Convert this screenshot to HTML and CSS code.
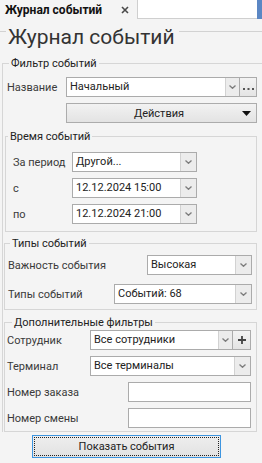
FILE: index.html
```html
<!DOCTYPE html>
<html lang="ru">
<head>
  <meta charset="UTF-8">
  <meta name="viewport" content="width=device-width, initial-scale=1.0">
  <title>Журнал событий</title>
  <link rel="stylesheet" href="styles.css">
</head>
<body>
  <div class="tabbar">
    <div class="tab">
      <span class="tab-title">Журнал событий</span>
      <svg class="tab-close" width="8" height="8" viewBox="0 0 8 8"><path d="M1 1L7 7M7 1L1 7" stroke="#4a4a4a" stroke-width="1.6"/></svg>
    </div>
    <div class="tab-search"></div>
    <div class="tab-edge"></div>
  </div>

  <div class="journal">
    <h1 class="journal-title">Журнал событий</h1>

    <div class="group filter">
      <div class="group-title">Фильтр событий</div>

      <div class="field field-name">
        <span class="field-label">Название</span>
        <div class="combo combo-name">
          <span class="combo-text">Начальный</span>
          <span class="combo-arrow arrow-narrow"><svg width="7" height="4" viewBox="0 0 7 4"><path d="M0.5 0.5L3.5 3.3L6.5 0.5" fill="none" stroke="#7d7d7d" stroke-width="1.3"/></svg></span>
        </div>
        <button class="small-btn btn-more"><svg width="11" height="2" viewBox="0 0 11 2"><rect x="0" y="0" width="2" height="2" fill="#555"/><rect x="4.5" y="0" width="2" height="2" fill="#555"/><rect x="9" y="0" width="2" height="2" fill="#555"/></svg></button>
      </div>

      <div class="field field-actions">
        <button class="actions">
          <span class="actions-text">Действия</span>
          <svg class="actions-caret" width="9" height="5" viewBox="0 0 9 5"><path d="M0 0H9L4.5 5Z" fill="#111"/></svg>
        </button>
      </div>

      <div class="group time">
        <div class="group-title">Время событий</div>
        <div class="rows">
          <div class="field">
            <span class="field-label">За период</span>
            <div class="combo combo-time">
              <span class="combo-text">Другой...</span>
              <span class="combo-arrow"><svg width="7" height="4" viewBox="0 0 7 4"><path d="M0.5 0.5L3.5 3.3L6.5 0.5" fill="none" stroke="#7d7d7d" stroke-width="1.3"/></svg></span>
            </div>
          </div>
          <div class="field">
            <span class="field-label">с</span>
            <div class="combo combo-time">
              <span class="combo-text">12.12.2024 15:00</span>
              <span class="combo-arrow"><svg width="7" height="4" viewBox="0 0 7 4"><path d="M0.5 0.5L3.5 3.3L6.5 0.5" fill="none" stroke="#7d7d7d" stroke-width="1.3"/></svg></span>
            </div>
          </div>
          <div class="field">
            <span class="field-label">по</span>
            <div class="combo combo-time">
              <span class="combo-text">12.12.2024 21:00</span>
              <span class="combo-arrow"><svg width="7" height="4" viewBox="0 0 7 4"><path d="M0.5 0.5L3.5 3.3L6.5 0.5" fill="none" stroke="#7d7d7d" stroke-width="1.3"/></svg></span>
            </div>
          </div>
        </div>
      </div>

      <div class="group types">
        <div class="group-title">Типы событий</div>
        <div class="rows">
          <div class="field">
            <span class="field-label">Важность события</span>
            <div class="combo combo-level">
              <span class="combo-text">Высокая</span>
              <span class="combo-arrow"><svg width="7" height="4" viewBox="0 0 7 4"><path d="M0.5 0.5L3.5 3.3L6.5 0.5" fill="none" stroke="#7d7d7d" stroke-width="1.3"/></svg></span>
            </div>
          </div>
          <div class="field">
            <span class="field-label">Типы событий</span>
            <div class="combo combo-kinds">
              <span class="combo-text">Событий: 68</span>
              <span class="combo-arrow"><svg width="7" height="4" viewBox="0 0 7 4"><path d="M0.5 0.5L3.5 3.3L6.5 0.5" fill="none" stroke="#7d7d7d" stroke-width="1.3"/></svg></span>
            </div>
          </div>
        </div>
      </div>

      <div class="group extra">
        <div class="group-title">Дополнительные фильтры</div>
        <div class="rows">
          <div class="field">
            <span class="field-label">Сотрудник</span>
            <div class="combo combo-staff">
              <span class="combo-text">Все сотрудники</span>
              <span class="combo-arrow arrow-narrow"><svg width="7" height="4" viewBox="0 0 7 4"><path d="M0.5 0.5L3.5 3.3L6.5 0.5" fill="none" stroke="#7d7d7d" stroke-width="1.3"/></svg></span>
            </div>
            <button class="small-btn btn-add"><svg width="8" height="8" viewBox="0 0 8 8"><path d="M4 0V8M0 4H8" stroke="#444" stroke-width="1.8"/></svg></button>
          </div>
          <div class="field">
            <span class="field-label">Терминал</span>
            <div class="combo combo-terminal">
              <span class="combo-text">Все терминалы</span>
              <span class="combo-arrow"><svg width="7" height="4" viewBox="0 0 7 4"><path d="M0.5 0.5L3.5 3.3L6.5 0.5" fill="none" stroke="#7d7d7d" stroke-width="1.3"/></svg></span>
            </div>
          </div>
          <div class="field">
            <span class="field-label">Номер заказа</span>
            <input class="text-input" type="text">
          </div>
          <div class="field">
            <span class="field-label">Номер смены</span>
            <input class="text-input" type="text">
          </div>
        </div>
      </div>
    </div>

    <button class="show-btn">Показать события</button>
  </div>
</body>
</html>
```
FILE: styles.css
```css
* {
  box-sizing: border-box;
}

body {
  margin: 0;
  width: 262px;
  height: 463px;
  overflow: hidden;
  background: #f4f4f4;
  font: 11px Roboto, "Liberation Sans", sans-serif;
  color: #333;
}

button,
input {
  font: inherit;
  color: inherit;
  margin: 0;
}

/* tab strip */
.tabbar {
  display: flex;
  height: 19px;
}

.tab {
  width: 137px;
  display: flex;
  align-items: center;
  padding-left: 5px;
  font-size: 12px;
  font-weight: bold;
  color: #111;
}

.tab-close {
  margin-left: auto;
  margin-right: 8px;
}

.tab-search {
  width: 120px;
  background: #fff;
  border-left: 1px solid #cfcfcf;
  border-bottom: 1px solid #cfcfcf;
}

.tab-edge {
  width: 5px;
  background: #5b87c4;
}

/* page title */
.journal {
  margin-top: 12px;
  border-top: 1px solid #d2d2d2;
}

.journal-title {
  width: fit-content;
  margin: -7px 0 0 6px;
  padding: 0 4px 0 2px;
  background: #f4f4f4;
  font-size: 21px;
  font-weight: normal;
  line-height: 24px;
  color: #333;
}

/* group boxes */
.group {
  border: 1px solid #d6d6d6;
}

.group-title {
  width: fit-content;
  margin-top: -7px;
  padding: 0 2px;
  background: #f4f4f4;
  line-height: 13px;
  color: #222;
}

.rows {
  display: flex;
  flex-direction: column;
  gap: 6px;
}

.field {
  display: flex;
  align-items: center;
  height: 20px;
}

.field-label {
  flex: none;
  color: #3a3a3a;
}

.filter {
  margin: 14px 0 0 2px;
  border-right: 0;
  border-bottom: 0;
}

.filter > .group-title {
  margin-left: 6px;
}

.field-name {
  margin-top: 7px;
  padding-left: 4px;
}

.field-name .field-label {
  width: 59px;
}

.field-actions {
  margin-top: 6px;
  padding-left: 63px;
}

/* combo boxes */
.combo {
  display: flex;
  height: 20px;
  border: 1px solid #ababab;
  background: #fff;
  color: #222;
}

.combo-text {
  flex: 1;
  padding-left: 3px;
  line-height: 18px;
  white-space: nowrap;
  overflow: hidden;
}

.combo-arrow {
  flex: none;
  width: 16px;
  display: flex;
  align-items: center;
  justify-content: center;
  border-left: 1px solid #d2d2d2;
  background: #ececec;
}

.arrow-narrow {
  width: 14px;
}

.combo-name {
  width: 174px;
}

.small-btn {
  flex: none;
  height: 20px;
  padding: 0;
  display: flex;
  align-items: center;
  justify-content: center;
  border: 1px solid #ababab;
  border-left: 0;
  background: linear-gradient(#f3f3f3, #e4e4e4);
}

.btn-more {
  width: 17px;
  padding-top: 3px;
}

.btn-add {
  width: 18px;
}

.actions {
  width: 191px;
  height: 20px;
  padding: 0;
  display: flex;
  align-items: center;
  border: 1px solid #acacac;
  background: linear-gradient(#f2f2f2, #e3e3e3);
  color: #222;
}

.actions-text {
  flex: 1;
  padding-left: 14px;
  text-align: center;
}

.actions-caret {
  margin: 0 5px 0 5px;
}

/* time */
.time {
  margin: 13px 5px 0 2px;
  padding: 0 0 7px 7px;
}

.time .group-title {
  margin-left: -5px;
}

.time .rows {
  margin-top: 9px;
}

.time .field-label {
  width: 59px;
}

.combo-time {
  width: 125px;
}

/* types */
.types {
  margin: 11px 5px 0 1px;
  padding: 0 4px 5px 3px;
}

.types .group-title {
  margin-left: 2px;
}

.types .rows {
  margin-top: 5px;
  gap: 9px;
}

.types .combo {
  margin-left: auto;
}

.combo-level {
  width: 105px;
}

.combo-kinds {
  width: 138px;
}

/* extra filters */
.extra {
  margin: 12px 5px 0 1px;
  padding: 0 5px 3px 2px;
}

.extra .group-title {
  margin-left: 5px;
}

.extra .rows {
  margin-top: 1px;
}

.extra .field-label {
  width: 83px;
}

.combo-staff {
  width: 143px;
}

.combo-terminal {
  width: 161px;
}

.text-input {
  width: 123px;
  height: 20px;
  margin-left: auto;
  border: 1px solid #ababab;
  background: #fff;
  padding: 0 3px;
}

/* bottom button */
.show-btn {
  display: block;
  width: 189px;
  height: 23px;
  margin: 3px 0 0 32px;
  border: 1px solid #3d95e0;
  background: linear-gradient(#eeeeee, #e2e2e2);
  outline: 1px dotted #222;
  outline-offset: -3px;
  color: #222;
}
```
